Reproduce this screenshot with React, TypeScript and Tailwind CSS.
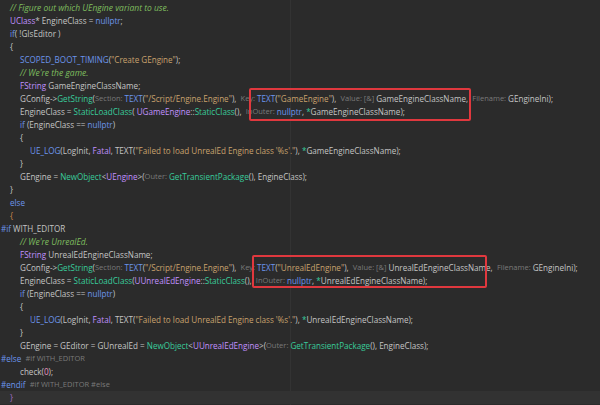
type Kind = "d" | "c" | "k" | "m" | "f" | "t" | "s" | "h" | "n" | "p" | "b" | "o";

type Tok = [Kind, string];

const kindClass: Record<Kind, string> = {
  d: "text-[#c4c4c4]",
  c: "text-[#7fbf5f] italic text-[8.5px]",
  k: "text-[#6c95eb]",
  m: "text-[#6c95eb]",
  f: "text-[#39cc9b]",
  t: "text-[#c191ff]",
  s: "text-[#c9a26d]",
  h: "text-[#7a7a7a] text-[7.5px] mr-[2px]",
  n: "text-[#ed94c0]",
  p: "text-[#6c95eb]",
  b: "text-[#d0884a]",
  o: "text-[#a46fc8]",
};

const indentClass = ["pl-[1px]", "pl-[10px]", "pl-[20px]", "pl-[30px]"];

const lines: { lvl: number; toks: Tok[]; active?: boolean }[] = [
  { lvl: 1, toks: [["c", "// Figure out which UEngine variant to use."]] },
  { lvl: 1, toks: [["t", "UClass"], ["d", "* EngineClass = "], ["k", "nullptr"], ["d", ";"]] },
  { lvl: 1, toks: [["k", "if"], ["d", "( !GIsEditor )"]] },
  { lvl: 1, toks: [["d", "{"]] },
  { lvl: 2, toks: [["m", "SCOPED_BOOT_TIMING"], ["d", "("], ["s", "\"Create GEngine\""], ["d", ");"]] },
  { lvl: 2, toks: [["c", "// We're the game."]] },
  { lvl: 2, toks: [["t", "FString"], ["d", " GameEngineClassName;"]] },
  {
    lvl: 2,
    toks: [
      ["d", "GConfig->"],
      ["f", "GetString"],
      ["d", "("],
      ["h", "Section:"],
      ["m", "TEXT"],
      ["d", "("],
      ["s", "\"/Script/Engine.Engine\""],
      ["d", "),  "],
      ["h", "Key:"],
      ["m", "TEXT"],
      ["d", "("],
      ["s", "\"GameEngine\""],
      ["d", "),  "],
      ["h", "Value: [&]"],
      ["d", "GameEngineClassName,  "],
      ["h", "Filename:"],
      ["d", "GEngineIni);"],
    ],
  },
  {
    lvl: 2,
    toks: [
      ["d", "EngineClass = "],
      ["f", "StaticLoadClass"],
      ["d", "( "],
      ["t", "UGameEngine"],
      ["d", "::"],
      ["f", "StaticClass"],
      ["d", "(),  "],
      ["h", "InOuter:"],
      ["k", "nullptr"],
      ["d", ", "],
      ["f", "*"],
      ["d", "GameEngineClassName);"],
    ],
  },
  { lvl: 2, toks: [["k", "if"], ["d", " (EngineClass == "], ["k", "nullptr"], ["d", ")"]] },
  { lvl: 2, toks: [["d", "{"]] },
  {
    lvl: 3,
    toks: [
      ["m", "UE_LOG"],
      ["d", "(LogInit, "],
      ["t", "Fatal"],
      ["d", ", TEXT("],
      ["s", "\"Failed to load UnrealEd Engine class '%s'.\""],
      ["d", "), "],
      ["f", "*"],
      ["d", "GameEngineClassName);"],
    ],
  },
  { lvl: 2, toks: [["d", "}"]] },
  {
    lvl: 2,
    toks: [
      ["d", "GEngine = "],
      ["f", "NewObject"],
      ["d", "<"],
      ["t", "UEngine"],
      ["d", ">("],
      ["h", "Outer:"],
      ["f", "GetTransientPackage"],
      ["d", "(), EngineClass);"],
    ],
  },
  { lvl: 1, toks: [["d", "}"]] },
  { lvl: 1, toks: [["k", "else"]] },
  { lvl: 1, toks: [["b", "{"]] },
  { lvl: 0, toks: [["p", "#if"], ["d", " WITH_EDITOR"]] },
  { lvl: 2, toks: [["c", "// We're UnrealEd."]] },
  { lvl: 2, toks: [["t", "FString"], ["d", " UnrealEdEngineClassName;"]] },
  {
    lvl: 2,
    toks: [
      ["d", "GConfig->"],
      ["f", "GetString"],
      ["d", "("],
      ["h", "Section:"],
      ["m", "TEXT"],
      ["d", "("],
      ["s", "\"/Script/Engine.Engine\""],
      ["d", "),  "],
      ["h", "Key:"],
      ["m", "TEXT"],
      ["d", "("],
      ["s", "\"UnrealEdEngine\""],
      ["d", "),  "],
      ["h", "Value: [&]"],
      ["d", "UnrealEdEngineClassName,  "],
      ["h", "Filename:"],
      ["d", "GEngineIni);"],
    ],
  },
  {
    lvl: 2,
    toks: [
      ["d", "EngineClass = "],
      ["f", "StaticLoadClass"],
      ["d", "("],
      ["t", "UUnrealEdEngine"],
      ["d", "::"],
      ["f", "StaticClass"],
      ["d", "(),  "],
      ["h", "InOuter:"],
      ["k", "nullptr"],
      ["d", ", "],
      ["f", "*"],
      ["d", "UnrealEdEngineClassName);"],
    ],
  },
  { lvl: 2, toks: [["k", "if"], ["d", " (EngineClass == "], ["k", "nullptr"], ["d", ")"]] },
  { lvl: 2, toks: [["d", "{"]] },
  {
    lvl: 3,
    toks: [
      ["m", "UE_LOG"],
      ["d", "(LogInit, "],
      ["t", "Fatal"],
      ["d", ", TEXT("],
      ["s", "\"Failed to load UnrealEd Engine class '%s'.\""],
      ["d", "), "],
      ["f", "*"],
      ["d", "UnrealEdEngineClassName);"],
    ],
  },
  { lvl: 2, toks: [["d", "}"]] },
  {
    lvl: 2,
    toks: [
      ["d", "GEngine = GEditor = GUnrealEd = "],
      ["f", "NewObject"],
      ["d", "<"],
      ["t", "UUnrealEdEngine"],
      ["d", ">("],
      ["h", "Outer:"],
      ["f", "GetTransientPackage"],
      ["d", "(), EngineClass);"],
    ],
  },
  { lvl: 0, toks: [["p", "#else"], ["d", "  "], ["h", "#if WITH_EDITOR"]] },
  { lvl: 2, toks: [["d", "check("], ["n", "0"], ["d", ");"]] },
  { lvl: 0, toks: [["p", "#endif"], ["d", "  "], ["h", "#if WITH_EDITOR #else"]] },
  { lvl: 1, toks: [["o", "}"]], active: true },
];

function CodeLine({ lvl, toks, active }: { lvl: number; toks: Tok[]; active?: boolean }) {
  return (
    <div className={`h-[13px] whitespace-pre flex items-center ${indentClass[lvl]} ${active ? "bg-[#323232]" : ""}`}>
      {toks.map(([k, text], i) => (
        <span key={i} className={kindClass[k]}>
          {text}
        </span>
      ))}
    </div>
  );
}

export default function App() {
  return (
    <div className="relative w-[600px] h-[405px] overflow-hidden bg-[#2b2b2b] text-[8.1px] leading-[13px] font-['Open_Sans',sans-serif]">
      <div className="absolute left-[290px] top-0 h-full w-px bg-[#333333]" />
      <div className="relative pt-px">
        {lines.map((l, i) => (
          <CodeLine key={i} {...l} />
        ))}
      </div>
      <div className="absolute left-[249px] top-[88px] w-[222px] h-[33px] border-2 border-[#e0383e] rounded-[2px]" />
      <div className="absolute left-[252px] top-[255px] w-[235px] h-[33px] border-2 border-[#e0383e] rounded-[2px]" />
    </div>
  );
}
